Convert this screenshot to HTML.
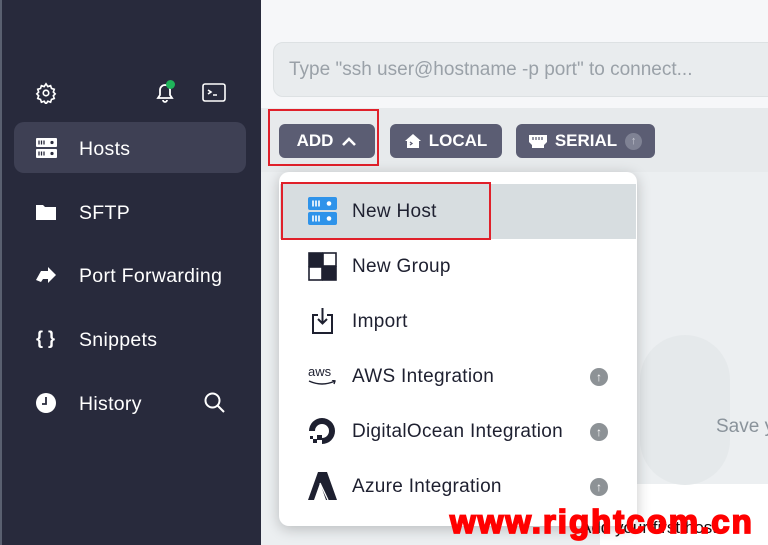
<!DOCTYPE html><html><head><style>
*{margin:0;padding:0;box-sizing:border-box}
body{width:768px;height:545px;overflow:hidden;position:relative;font-family:"Liberation Sans",sans-serif;background:#eceff1}
.a{position:absolute;white-space:nowrap}
.sb{left:0;top:0;width:261px;height:545px;background:#282a3c;border-left:2px solid #5a6070}
.nav{left:79px;color:#fff;font-size:19.5px;letter-spacing:.3px}
.ic{left:36px}
.btn{background:#5b5d73;color:#fff;font-weight:bold;font-size:17px;border-radius:6px;height:34px;top:124px;display:flex;align-items:center;justify-content:center;gap:8px}
.it{left:352px;font-size:19px;color:#1e2030;letter-spacing:.3px}
.up{left:590px;width:18px;height:18px;border-radius:50%;background:#8d9296;color:#fff;font-size:12px;text-align:center;line-height:18px;font-weight:bold}
</style></head><body>
<div class="a" style="left:261px;top:0;width:507px;height:108px;background:#f6f7f9"></div>
<div class="a" style="left:261px;top:108px;width:507px;height:64px;background:#e7eaec"></div>
<div class="a" style="left:600px;top:484px;width:168px;height:61px;background:#fff"></div>
<div class="a" style="left:273px;top:42px;width:510px;height:55px;border-radius:10px;background:#e9ecee;border:1px solid #dde1e3"></div>
<div class="a" style="left:289px;top:59px;font-size:19px;color:#9aa1a8">Type "ssh user@hostname -p port" to connect...</div>
<div class="a" style="left:640px;top:335px;width:90px;height:150px;border-radius:45px;background:#e5e9eb"></div>
<div class="a" style="left:716px;top:416px;font-size:19px;color:#8a939b">Save y</div>

<div class="a sb"></div>
<svg class="a" style="left:35px;top:82px" width="22" height="22" viewBox="0 0 24 24" fill="none" stroke="#fff" stroke-width="1.8"><circle cx="12" cy="12" r="3"/><path d="M12 2l2 3 3-1 1 3 3 1-1 3 2 2-2 2 1 3-3 1-1 3-3-1-2 3-2-3-3 1-1-3-3-1 1-3-2-2 2-2-1-3 3-1 1-3 3 1z"/></svg>
<svg class="a" style="left:154px;top:80px" width="22" height="24" viewBox="0 0 22 24" fill="none" stroke="#fff" stroke-width="1.8"><path d="M4 18h14l-2-3V10a5 5 0 0 0-10 0v5zM9 20a2 2 0 0 0 4 0"/></svg>
<div class="a" style="left:166px;top:80px;width:9px;height:9px;border-radius:50%;background:#1fb45a"></div>
<svg class="a" style="left:202px;top:83px" width="24" height="19" viewBox="0 0 24 19" fill="none" stroke="#fff" stroke-width="1.6"><rect x="1" y="1" width="22" height="17" rx="2"/><path d="M6 7l3 2-3 2M11 12h4"/></svg>
<div class="a" style="left:14px;top:122px;width:232px;height:51px;border-radius:10px;background:#3e4054"></div>
<svg class="a ic" style="top:138px" width="21" height="20" viewBox="0 0 21 20"><rect width="21" height="9" rx="1" fill="#fff"/><rect y="11" width="21" height="9" rx="1" fill="#fff"/><path d="M3 2.5v4M5.5 2.5v4M8 2.5v4M3 13.5v4M5.5 13.5v4M8 13.5v4" stroke="#282a3c" stroke-width="1.3"/><circle cx="16" cy="4.5" r="1.6" fill="#282a3c"/><circle cx="16" cy="15.5" r="1.6" fill="#282a3c"/></svg>
<div class="a nav" style="top:138px">Hosts</div>
<svg class="a ic" style="top:204px" width="20" height="16" viewBox="0 0 20 16"><path d="M0 1h7l2 2h11v13H0z" fill="#fff"/></svg>
<div class="a nav" style="top:202px">SFTP</div>
<svg class="a ic" style="top:266px" width="20" height="18" viewBox="0 0 20 18"><path d="M0 14l5-9h7V1l8 8-8 8v-4H7l-2 3z" fill="#fff"/></svg>
<div class="a nav" style="top:265px">Port Forwarding</div>
<div class="a" style="left:36px;top:328px;color:#fff;font-size:18px;font-weight:bold">{ }</div>
<div class="a nav" style="top:329px">Snippets</div>
<svg class="a ic" style="top:393px" width="20" height="20" viewBox="0 0 20 20"><circle cx="10" cy="10" r="10" fill="#fff"/><path d="M10 4v7H6" stroke="#282a3c" stroke-width="1.8" fill="none"/></svg>
<div class="a nav" style="top:393px">History</div>
<svg class="a" style="left:204px;top:392px" width="21" height="21" viewBox="0 0 21 21" fill="none" stroke="#fff" stroke-width="2"><circle cx="8.5" cy="8.5" r="7"/><path d="M14 14l6 6"/></svg>

<div class="a" style="left:268px;top:109px;width:111px;height:57px;border:2px solid #e0202a"></div>
<div class="a btn" style="left:279px;width:96px">ADD <svg width="16" height="10" viewBox="0 0 16 10" fill="none" stroke="#fff" stroke-width="2.6"><path d="M2 9l6-6 6 6"/></svg></div>
<div class="a btn" style="left:390px;width:112px"><svg width="16" height="14" viewBox="0 0 16 14"><path d="M8 0l8 7h-2v7H2V7H0z" fill="#fff"/><path d="M5 8l2 1.5L5 11" stroke="#5b5d73" stroke-width="1.3" fill="none"/></svg>LOCAL</div>
<div class="a btn" style="left:516px;width:139px"><svg width="18" height="13" viewBox="0 0 18 13"><path d="M0 0h18v7l-3 3v3H3v-3L0 7z" fill="#fff"/><path d="M4 2v3M7 2v3M10 2v3M13 2v3" stroke="#5b5d73" stroke-width="1.3"/></svg>SERIAL <span style="width:17px;height:17px;border-radius:50%;background:#7f8294;font-size:11px;line-height:17px;text-align:center;color:#c8cad4">↑</span></div>

<div class="a" style="left:279px;top:172px;width:358px;height:354px;background:#fff;border-radius:10px;box-shadow:0 3px 14px rgba(0,0,0,.22)"></div>
<div class="a" style="left:280px;top:184px;width:356px;height:55px;background:#d7dde0"></div>
<div class="a" style="left:281px;top:182px;width:210px;height:58px;border:2px solid #e0202a"></div>
<svg class="a" style="left:308px;top:197px" width="29" height="28" viewBox="0 0 29 28"><rect width="29" height="13" rx="2" fill="#2e93ea"/><rect y="15" width="29" height="13" rx="2" fill="#2e93ea"/><path d="M5 3.5v6M8 3.5v6M11 3.5v6M5 18.5v6M8 18.5v6M11 18.5v6" stroke="#fff" stroke-width="1.6"/><circle cx="21" cy="6.5" r="2.3" fill="#fff"/><circle cx="21" cy="21.5" r="2.3" fill="#fff"/></svg>
<div class="a it" style="top:201px">New Host</div>
<svg class="a" style="left:308px;top:252px" width="29" height="29" viewBox="0 0 29 29" stroke="#1e2030" stroke-width="1.6"><rect x="1" y="1" width="13" height="13" fill="#1e2030"/><rect x="15" y="1" width="13" height="13" fill="none"/><rect x="1" y="15" width="13" height="13" fill="none"/><rect x="15" y="15" width="13" height="13" fill="#1e2030"/></svg>
<div class="a it" style="top:256px">New Group</div>
<svg class="a" style="left:310px;top:307px" width="25" height="28" viewBox="0 0 25 28" fill="none" stroke="#1e2030" stroke-width="2"><path d="M8 8H3v18h19V8h-5M12.5 1v15M8 12l4.5 4.5L17 12"/></svg>
<div class="a it" style="top:311px">Import</div>
<div class="a" style="left:308px;top:364px;font-size:13px;color:#1e2030">aws</div>
<svg class="a" style="left:308px;top:380px" width="29" height="6" viewBox="0 0 29 6" fill="none" stroke="#1e2030" stroke-width="1.4"><path d="M1 1q13 6 26 0M24 0l3 1-1 3"/></svg>
<div class="a it" style="top:366px">AWS Integration</div>
<div class="a up" style="top:368px">↑</div>
<svg class="a" style="left:308px;top:417px" width="29" height="29" viewBox="0 0 29 29"><path d="M14 27A13 13 0 1 0 1 14h6a7 7 0 1 1 7 7z" fill="#1e2030"/><rect x="9" y="18" width="5" height="5" fill="#1e2030"/><rect x="5" y="22" width="4" height="4" fill="#1e2030"/><rect x="2" y="19" width="3" height="3" fill="#1e2030"/></svg>
<div class="a it" style="top:421px">DigitalOcean Integration</div>
<div class="a up" style="top:423px">↑</div>
<svg class="a" style="left:308px;top:472px" width="29" height="28" viewBox="0 0 29 28"><path d="M10 0h9l10 28h-11L12 11 6 28H0z" fill="#1e2030"/><path d="M12 11l8 17" stroke="#fff" stroke-width="1.3"/></svg>
<div class="a it" style="top:476px">Azure Integration</div>
<div class="a up" style="top:478px">↑</div>

<div class="a" style="left:580px;top:518px;font-size:17px;color:#111">Add your first host</div>
<div class="a" style="left:450px;top:503px;font-size:33px;font-weight:900;color:#f00;letter-spacing:2px;font-family:'Liberation Sans',sans-serif;-webkit-text-stroke:1.8px #f00">www.rightcom.cn</div>
</body></html>
